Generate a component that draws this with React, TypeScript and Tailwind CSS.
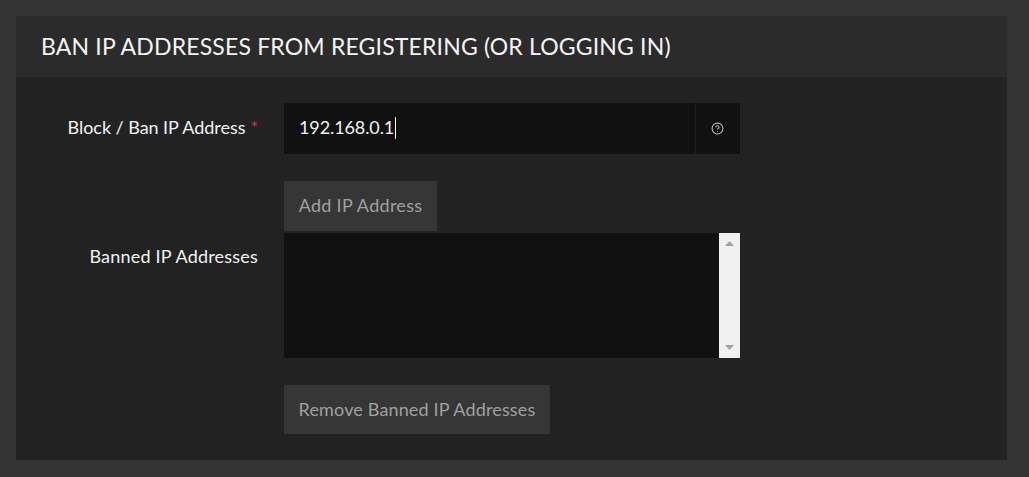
import { CircleHelp } from "lucide-react";

export default function App() {
  return (
    <div className="min-h-screen w-full bg-[#333333] pt-4 pr-[22px] pb-[17px] pl-4 font-['Lato','Noto_Sans',sans-serif] text-white">
      <div className="bg-[#222222]">
        {/* Header */}
        <div className="flex h-[61px] items-center bg-[#2b2b2b] pr-[26px] pl-[25px]">
          <h1 className="text-[23px] tracking-[0.17px] text-[#f4f4f4]">
            BAN IP ADDRESSES FROM REGISTERING (OR LOGGING IN)
          </h1>
        </div>

        {/* Form */}
        <div className="flex h-[383px] flex-col pt-[26px]">
          <div className="flex">
            <label className="flex h-[51px] w-[268px] items-center justify-end pr-[26px] pb-[3px] text-[18px] tracking-[-0.05px] text-[#f2f2f2]">
              Block / Ban IP Address
              <span className="ml-[5px] text-[#d9342f]">*</span>
            </label>
            <div className="flex h-[51px] w-[456px] bg-[#111111]">
              <div className="flex flex-1 items-center pb-[2px] pl-[15px] text-[18px] tracking-[-0.1px] text-[#f2f2f2]">
                192.168.0.1
                <span className="ml-px h-[22px] w-px bg-white" />
              </div>
              <div className="flex w-[45px] items-center justify-center border-l border-[#1f1f1f] pr-[2px]">
                <CircleHelp size={13} strokeWidth={2} className="text-[#b5b5b5]" />
              </div>
            </div>
          </div>

          <div className="mt-[27px] ml-[268px]">
            <button className="h-[50px] w-[153px] bg-[#363636] pb-[2px] text-[18px] tracking-[0.3px] text-[#a0a0a0]">
              Add IP Address
            </button>
          </div>

          <div className="mt-[2px] flex">
            <label className="w-[268px] pt-[10px] pr-[26px] text-right text-[18px] tracking-[0.2px] text-[#f2f2f2]">
              Banned IP Addresses
            </label>
            <div className="flex h-[125px] w-[456px] bg-[#111111]">
              <div className="flex-1" />
              {/* Scrollbar */}
              <div className="flex w-[21px] flex-col items-center justify-between bg-[#f1f1f1] py-[8px]">
                <svg width="9" height="5" viewBox="0 0 9 5">
                  <path d="M4.5 0L9 5H0z" fill="#a3a3a3" />
                </svg>
                <svg width="9" height="5" viewBox="0 0 9 5">
                  <path d="M0 0h9L4.5 5z" fill="#a3a3a3" />
                </svg>
              </div>
            </div>
          </div>

          <div className="mt-[27px] ml-[268px]">
            <button className="h-[49px] w-[266px] bg-[#363636] text-[18px] tracking-[0.15px] text-[#a0a0a0]">
              Remove Banned IP Addresses
            </button>
          </div>
        </div>
      </div>
    </div>
  );
}
